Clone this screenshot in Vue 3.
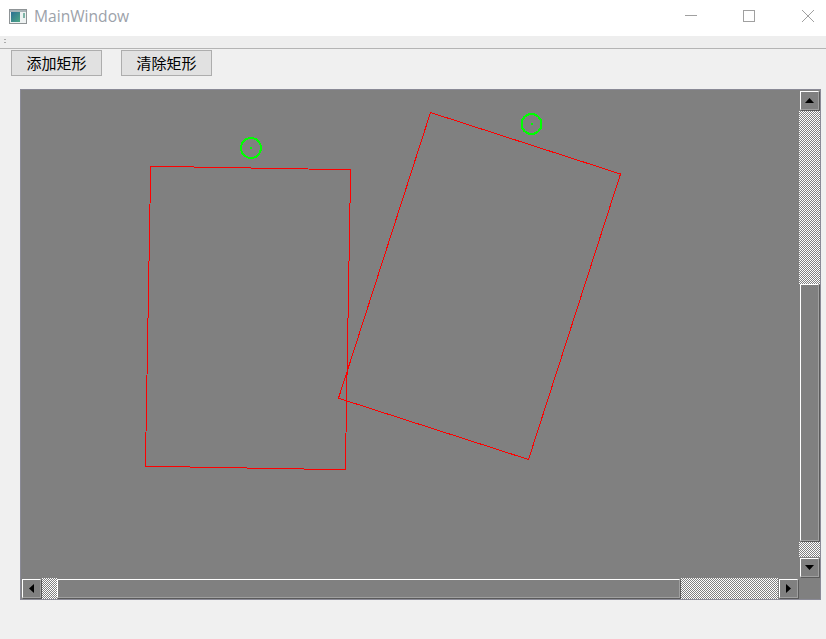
<script setup>
const shapes = [
  '150.67,166.25 350.6,169.75 345.36,469.73 145.4,466.22',
  '430.5,112.5 620.5,174 528.5,459.5 338.5,398.2'
]
const handles = [
  { x: 251, y: 148, dotX: 250, dotY: 147 },
  { x: 531.5, y: 124, dotX: 531, dotY: 123 }
]
const offsetX = 21
const offsetY = 90
</script>

<template>
  <div class="window">
    <header class="titlebar">
      <svg class="app-icon" width="18" height="15" viewBox="0 0 18 15">
        <defs>
          <linearGradient id="pane" x1="0" y1="0" x2="1" y2="1">
            <stop offset="0" stop-color="#2c6f93" />
            <stop offset="1" stop-color="#4fa886" />
          </linearGradient>
        </defs>
        <rect x="0.5" y="0.5" width="17" height="14" fill="#eef2f2" stroke="#8f9496" />
        <rect x="1" y="1" width="16" height="2" fill="#a9b4b8" />
        <rect x="2" y="3" width="9" height="10" fill="url(#pane)" />
        <rect x="14" y="4" width="2" height="5" fill="#7fb5a8" />
      </svg>
      <span class="title">MainWindow</span>
      <div class="controls">
        <svg width="14" height="14" viewBox="0 0 14 14"><path d="M2 6.5H14" stroke="#a0a0a0" fill="none" /></svg>
        <svg width="14" height="14" viewBox="0 0 14 14"><rect x="1.5" y="1.5" width="11" height="11" stroke="#a0a0a0" fill="none" /></svg>
        <svg width="14" height="14" viewBox="0 0 14 14"><path d="M1 1L13 13M13 1L1 13" stroke="#a0a0a0" fill="none" /></svg>
      </div>
    </header>

    <div class="toolbar">
      <span class="grip"></span>
    </div>

    <div class="actions">
      <button class="btn">添加矩形</button>
      <button class="btn">清除矩形</button>
    </div>

    <div class="view">
      <svg class="scene" width="778" height="488" :viewBox="`${offsetX} ${offsetY} 778 488`">
        <polygon
          v-for="(p, i) in shapes"
          :key="i"
          :points="p"
          fill="none"
          stroke="#ff0000"
          shape-rendering="crispEdges"
        />
        <g v-for="(h, i) in handles" :key="'h' + i">
          <circle :cx="h.x" :cy="h.y" r="10" fill="none" stroke="#00ff00" stroke-width="2" shape-rendering="crispEdges" />
          <rect :x="h.dotX" :y="h.dotY" width="2" height="2" fill="#00ff00" />
        </g>
      </svg>

      <div class="vbar">
        <div class="sb-btn">
          <svg width="9" height="5" viewBox="0 0 9 5"><path d="M4.5 0L9 5H0Z" fill="#000" /></svg>
        </div>
        <div class="checker v-top"></div>
        <div class="thumb v-thumb"></div>
        <div class="checker v-bottom"></div>
        <div class="sb-btn">
          <svg width="9" height="5" viewBox="0 0 9 5"><path d="M0 0H9L4.5 5Z" fill="#000" /></svg>
        </div>
      </div>

      <div class="hbar">
        <div class="sb-btn">
          <svg width="5" height="9" viewBox="0 0 5 9"><path d="M5 0V9L0 4.5Z" fill="#000" /></svg>
        </div>
        <div class="checker h-left"></div>
        <div class="thumb h-thumb"></div>
        <div class="checker h-right"></div>
        <div class="sb-btn">
          <svg width="5" height="9" viewBox="0 0 5 9"><path d="M0 0L5 4.5L0 9Z" fill="#000" /></svg>
        </div>
      </div>
    </div>
  </div>
</template>

<style scoped>
.window {
  width: 826px;
  height: 639px;
  background: #f0f0f0;
  display: flex;
  flex-direction: column;
  overflow: hidden;
  font-family: "Noto Sans CJK SC", "Noto Sans", sans-serif;
}
.titlebar {
  height: 36px;
  background: #fff;
  display: flex;
  align-items: center;
  padding-left: 9px;
  box-sizing: border-box;
}
.app-icon {
  margin-right: 7px;
  margin-top: -4px;
}
.title {
  font-family: "Open Sans", "Noto Sans", sans-serif;
  font-size: 15.6px;
  color: #9ca2aa;
  margin-top: -4px;
}
.controls {
  margin-left: auto;
  display: flex;
  gap: 45px;
  padding-right: 11px;
  margin-top: -4px;
}
.toolbar {
  height: 13px;
  background: #eeeeee;
  border-bottom: 1px solid #b4b4b4;
  box-sizing: border-box;
  display: flex;
  align-items: center;
  padding-left: 4px;
}
.grip {
  width: 2px;
  height: 6px;
  background: repeating-linear-gradient(#aaa 0 1px, transparent 1px 3px);
}
.actions {
  display: flex;
  gap: 19px;
  padding: 1px 0 0 11px;
}
.btn {
  width: 91px;
  height: 26px;
  padding: 0;
  background: #e1e1e1;
  border: 1px solid #adadad;
  color: #000;
  font-family: "Noto Sans CJK SC", sans-serif;
  font-size: 15px;
  font-weight: 400;
  line-height: 24px;
}
.view {
  margin: 13px 0 0 20px;
  width: 801px;
  height: 511px;
  box-sizing: border-box;
  background: #808080;
  border: 1px solid #8a8a96;
  display: grid;
  grid-template-columns: 778px 21px;
  grid-template-rows: 488px 21px;
}
.scene {
  display: block;
  overflow: visible;
}
.vbar {
  grid-column: 2;
  grid-row: 1;
  display: flex;
  flex-direction: column;
  align-items: center;
  padding-top: 1px;
}
.hbar {
  grid-column: 1;
  grid-row: 2;
  display: flex;
  align-items: center;
  padding-left: 1px;
}
.sb-btn {
  width: 19px;
  height: 19px;
  box-sizing: border-box;
  display: flex;
  align-items: center;
  justify-content: center;
  flex: none;
  border: 1px solid;
  border-color: #fff #a0a0a0 #a0a0a0 #fff;
  box-shadow: 1px 1px 0 #5a5a5a;
}
.thumb {
  box-sizing: border-box;
  border: 1px solid;
  border-color: #fff #a0a0a0 #a0a0a0 #fff;
  box-shadow: 1px 1px 0 #5a5a5a;
  flex: none;
}
.checker {
  flex: none;
  background-color: #fff;
  background-image:
    linear-gradient(45deg, #808080 25%, transparent 25%, transparent 75%, #808080 75%),
    linear-gradient(45deg, #808080 25%, transparent 25%, transparent 75%, #808080 75%);
  background-size: 2px 2px;
  background-position: 0 0, 1px 1px;
}
.v-top {
  width: 21px;
  height: 173px;
  margin-top: 1px;
}
.v-thumb {
  width: 19px;
  height: 257px;
}
.v-bottom {
  width: 21px;
  height: 15px;
  margin: 1px 0;
}
.h-left {
  width: 15px;
  height: 21px;
  margin-left: 1px;
}
.h-thumb {
  width: 623px;
  height: 19px;
}
.h-right {
  width: 97px;
  height: 21px;
  margin: 0 1px;
}
</style>

<style>
html, body {
  margin: 0;
  background: #f0f0f0;
}
</style>
